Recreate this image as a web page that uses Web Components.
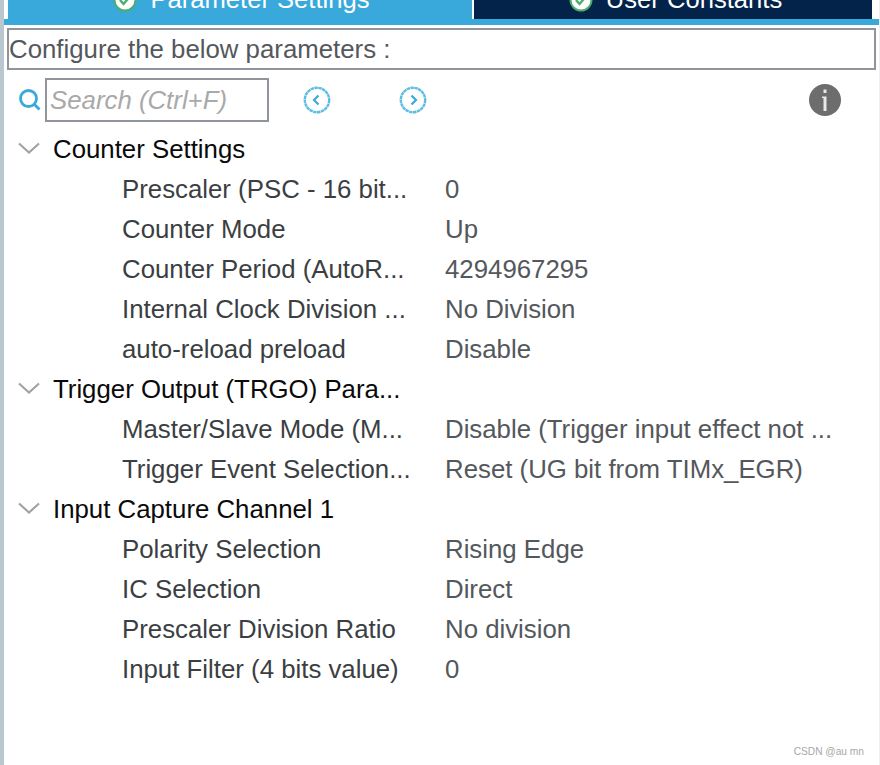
<!DOCTYPE html>
<html>
<head>
<meta charset="utf-8">
<style>
html,body{margin:0;padding:0;background:#fff;}
body{width:880px;height:765px;overflow:hidden;font-family:"Liberation Sans",Arial,sans-serif;}
</style>
</head>
<body>
<mx-panel>
  <mx-tabs></mx-tabs>
  <mx-config>Configure the below parameters :</mx-config>
  <mx-toolbar></mx-toolbar>
  <mx-group title="Counter Settings">
    <mx-param name="Prescaler (PSC - 16 bit..." value="0"></mx-param>
    <mx-param name="Counter Mode" value="Up"></mx-param>
    <mx-param name="Counter Period (AutoR..." value="4294967295"></mx-param>
    <mx-param name="Internal Clock Division ..." value="No Division"></mx-param>
    <mx-param name="auto-reload preload" value="Disable"></mx-param>
  </mx-group>
  <mx-group title="Trigger Output (TRGO) Para...">
    <mx-param name="Master/Slave Mode (M..." value="Disable (Trigger input effect not ..."></mx-param>
    <mx-param name="Trigger Event Selection..." value="Reset (UG bit from TIMx_EGR)"></mx-param>
  </mx-group>
  <mx-group title="Input Capture Channel 1">
    <mx-param name="Polarity Selection" value="Rising Edge"></mx-param>
    <mx-param name="IC Selection" value="Direct"></mx-param>
    <mx-param name="Prescaler Division Ratio" value="No division"></mx-param>
    <mx-param name="Input Filter (4 bits value)" value="0"></mx-param>
  </mx-group>
</mx-panel>
<script>
const panel_template = document.createElement('template');
panel_template.innerHTML = `
<style>
:host{
  display: block;
  position: relative;
  width: 880px;
  height: 765px;
  box-sizing: border-box;
  border-left: 4px solid #b9c7d0;
  border-right: 1px solid #f0f0f0;
  background: #fff;
}
.mark{
  position: absolute;
  right: 15px;
  bottom: 8px;
  font-size: 10.2px;
  color: #a8a8a8;
}
</style>
<slot></slot>
<div class="mark">CSDN @au mn</div>`;

class mxPanel extends HTMLElement{
  constructor(){
    super();
    this.attachShadow({mode:"open"});
    this.shadowRoot.appendChild(panel_template.content.cloneNode(true));
  }
}

const check_icon = `<svg width="24" height="24" viewBox="0 0 24 24"><circle cx="12" cy="12" r="10.5" fill="#fff" stroke="#4cae6a" stroke-width="2"/><path d="M7 12l3.5 4L17 8.5" fill="none" stroke="#4cae6a" stroke-width="2.4"/></svg>`;

const tabs_template = document.createElement('template');
tabs_template.innerHTML = `
<style>
:host{
  display: block;
  background: #fff;
}
#row{
  display: flex;
  height: 19px;
  padding-left: 4px;
}
.tab{
  box-sizing: border-box;
  height: 19px;
  overflow: hidden;
  display: flex;
  align-items: flex-end;
  justify-content: center;
  gap: 13px;
  font-size: 25.6px;
  line-height: 25px;
  color: #fff;
}
.tab span,.tab svg{
  flex: none;
  position: relative;
  top: -7px;
}
#one{
  width: 464px;
  padding-left: 3px;
  background: #39a9dc;
}
#two{
  width: 398px;
  margin-left: 2px;
  padding-left: 5px;
  background: #03234b;
}
#line{
  height: 6px;
  background: #39a9dc;
}
</style>
<div id="row">
  <div class="tab" id="one">${check_icon}<span>Parameter Settings</span></div>
  <div class="tab" id="two">${check_icon}<span>User Constants</span></div>
</div>
<div id="line"></div>`;

class mxTabs extends HTMLElement{
  constructor(){
    super();
    this.attachShadow({mode:"open"});
    this.shadowRoot.appendChild(tabs_template.content.cloneNode(true));
  }
}

const config_template = document.createElement('template');
config_template.innerHTML = `
<style>
:host{
  display: block;
  box-sizing: border-box;
  height: 42px;
  margin: 3px 3px 0 3px;
  border: 2px solid #8f959b;
  font-size: 25.8px;
  line-height: 38px;
  color: #54585c;
  white-space: nowrap;
}
</style>
<slot></slot>`;

class mxConfig extends HTMLElement{
  constructor(){
    super();
    this.attachShadow({mode:"open"});
    this.shadowRoot.appendChild(config_template.content.cloneNode(true));
  }
}

const toolbar_template = document.createElement('template');
toolbar_template.innerHTML = `
<style>
:host{
  display: flex;
  align-items: center;
  height: 44px;
  margin-top: 8px;
  margin-bottom: 7px;
  padding-left: 14px;
}
#search{
  box-sizing: border-box;
  width: 224px;
  height: 44px;
  margin-left: 4px;
  border: 2px solid #8f959b;
  padding-left: 3px;
  font-size: 25.8px;
  line-height: 40px;
  font-style: italic;
  color: #a9a9a9;
  white-space: nowrap;
}
#prev{ margin-left: 34px; }
#next{ margin-left: 68px; }
#info{ margin-left: 382px; }
svg{ flex: none; display: block; }
</style>
<svg width="23" height="24" viewBox="0 0 23 24"><circle cx="10.5" cy="10.5" r="8" fill="none" stroke="#39a9dc" stroke-width="2.8"/><path d="M16 16l5.5 5.5" stroke="#39a9dc" stroke-width="2.8"/></svg>
<div id="search">Search (Ctrl+F)</div>
<svg id="prev" width="28" height="28" viewBox="0 0 28 28"><circle cx="14" cy="14" r="12.2" fill="none" stroke="#5cbce4" stroke-width="2.4" stroke-dasharray="3.4 .5"/><path d="M15.500 9.500L11 14l4.500 4.500" fill="none" stroke="#39a9dc" stroke-width="2.2"/></svg>
<svg id="next" width="28" height="28" viewBox="0 0 28 28"><circle cx="14" cy="14" r="12.2" fill="none" stroke="#5cbce4" stroke-width="2.4" stroke-dasharray="3.4 .5"/><path d="M12.500 9.500L17 14l-4.500 4.500" fill="none" stroke="#39a9dc" stroke-width="2.2"/></svg>
<svg id="info" width="32" height="32" viewBox="0 0 32 32"><circle cx="16" cy="16" r="16" fill="#6d6d6d"/><rect x="14.500" y="5.500" width="3" height="3.500" fill="#e8e8e8"/><path d="M13 12.500H17.500V27H14.500V14H13z" fill="#e8e8e8"/></svg>`;

class mxToolbar extends HTMLElement{
  constructor(){
    super();
    this.attachShadow({mode:"open"});
    this.shadowRoot.appendChild(toolbar_template.content.cloneNode(true));
  }
}

const group_template = document.createElement('template');
group_template.innerHTML = `
<style>
:host{
  display: block;
}
#head{
  display: flex;
  align-items: center;
  height: 40px;
  padding-left: 14px;
  font-size: 25.8px;
  color: #0a0a0a;
  white-space: nowrap;
}
svg{
  flex: none;
  margin-right: 13px;
  position: relative;
  top: -1px;
}
</style>
<div id="head">
  <svg width="22" height="12" viewBox="0 0 22 12"><path d="M1 1.500l10 9 10-9" fill="none" stroke="#a3a3a3" stroke-width="2.200"/></svg>
  <span id="title"></span>
</div>
<slot></slot>`;

class mxGroup extends HTMLElement{
  constructor(){
    super();
    this.attachShadow({mode:"open"});
    this.shadowRoot.appendChild(group_template.content.cloneNode(true));
    this.shadowRoot.getElementById("title").innerText = this.getAttribute("title");
  }
}

const param_template = document.createElement('template');
param_template.innerHTML = `
<style>
:host{
  display: grid;
  grid-template-columns: 323px 1fr;
  height: 40px;
  line-height: 40px;
  padding-left: 118px;
  font-size: 25.8px;
  white-space: nowrap;
}
#name{ color: #3b3f43; }
#value{ color: #54585c; }
</style>
<span id="name"></span>
<span id="value"></span>`;

class mxParam extends HTMLElement{
  constructor(){
    super();
    this.attachShadow({mode:"open"});
    this.shadowRoot.appendChild(param_template.content.cloneNode(true));
    this.shadowRoot.getElementById("name").innerText = this.getAttribute("name");
    this.shadowRoot.getElementById("value").innerText = this.getAttribute("value");
  }
}

customElements.define("mx-panel", mxPanel);
customElements.define("mx-tabs", mxTabs);
customElements.define("mx-config", mxConfig);
customElements.define("mx-toolbar", mxToolbar);
customElements.define("mx-group", mxGroup);
customElements.define("mx-param", mxParam);
</script>
</body>
</html>
